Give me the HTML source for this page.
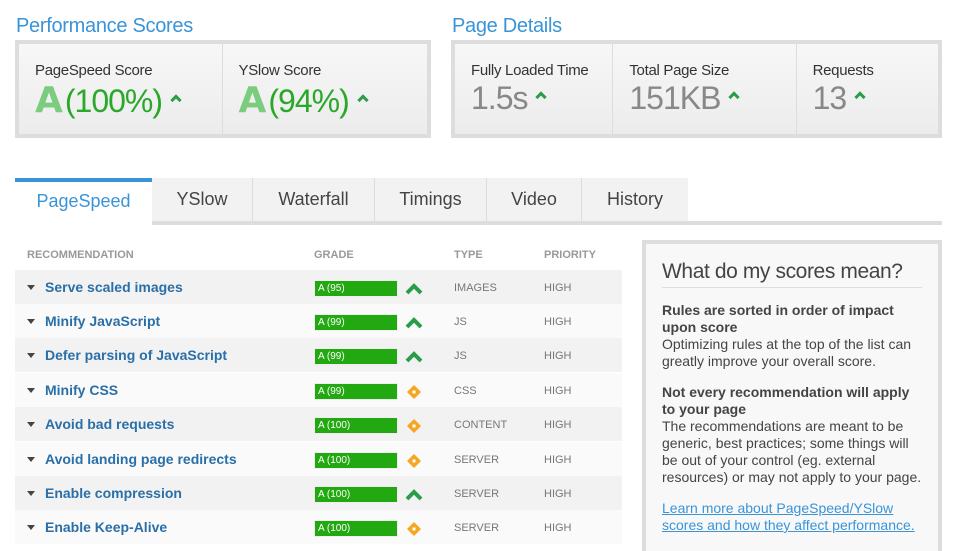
<!DOCTYPE html>
<html><head><style>
*{margin:0;padding:0;box-sizing:border-box}
body{width:960px;height:551px;overflow:hidden;background:#fff;font-family:"Liberation Sans",sans-serif;position:relative}
.abs{position:absolute}
.h{color:#3a94d8;font-size:20px;top:15px;letter-spacing:-0.3px}
.box{border:4px solid #ddd;top:40px;height:98px;display:flex;background:#ddd}
.cell{background:linear-gradient(#f7f7f7,#ececec);height:90px;margin-right:1px;padding:18px 0 0 16px}
.cell:last-child{margin-right:0}
.lab{font-size:15px;color:#333;letter-spacing:-0.3px}
.val{font-size:32px;color:#888;margin-top:1px;white-space:nowrap;letter-spacing:-1px}
.g{color:#2aa82a}
.bigA{font-weight:bold;color:#7ccc80;font-size:36px;font-family:"DejaVu Sans",sans-serif;margin-right:3px}
.car{display:inline-block;width:8px;height:8px;border-left:3px solid #2a9d4a;border-top:3px solid #2a9d4a;transform:rotate(45deg);margin:0 0 8px 10px;vertical-align:middle}
.tabs{top:178px;left:15px;height:44px;display:flex}
.tab{background:#f2f2f2;height:44px;font-size:18px;color:#444;text-align:center;line-height:43px;border-right:1px solid #ddd}
.tab.act{background:#fff;color:#3a94d8;border-top:4px solid #3a94d8;line-height:38px;border-right:none}
.row{position:absolute;left:15px;width:607px;height:34px;font-size:11px;color:#777}
.row .n{position:absolute;left:30px;top:9px;font-size:14px;font-weight:bold;color:#2a6fa8}
.row .tri{position:absolute;left:12px;top:15px;border-left:4px solid transparent;border-right:4px solid transparent;border-top:5px solid #444}
.bar{position:absolute;left:299px;top:10px;width:84px;height:17px;background:#22a811;border:1px solid #eee;color:#fff;font-size:10px;line-height:15px;padding-left:3px}
.ty{position:absolute;left:439px;top:12px}
.pr{position:absolute;left:529px;top:12px}
.ic{position:absolute;left:390px;top:11px}
.hd{top:249px;font-size:11px;color:#999;font-weight:bold}
.panel{left:642px;top:240px;width:300px;height:311px;overflow:hidden;border:4px solid #ddd;border-bottom:none;background:#f8f8f8;padding:15px 16px;color:#444;font-size:14px;line-height:17px}
.panel h2{font-weight:normal;font-size:21px;letter-spacing:-0.4px;white-space:nowrap;color:#444;padding-bottom:2px;border-bottom:1px solid #ddd;margin-bottom:14px;line-height:26px}
.panel b{display:block}
.panel p{margin-bottom:14px}
.panel a{color:#3a94d8;text-decoration:underline}
</style></head><body>
<div class="abs h" style="left:16px">Performance Scores</div>
<div class="abs h" style="left:452px">Page Details</div>
<div class="abs box" style="left:15px;width:416px">
 <div class="cell" style="width:203px"><div class="lab">PageSpeed Score</div><div class="val g"><span class="bigA">A</span>(100%)<span class="car"></span></div></div>
 <div class="cell" style="width:205px"><div class="lab">YSlow Score</div><div class="val g"><span class="bigA">A</span>(94%)<span class="car"></span></div></div>
</div>
<div class="abs box" style="left:451px;width:491px">
 <div class="cell" style="width:158px"><div class="lab">Fully Loaded Time</div><div class="val">1.5s<span class="car"></span></div></div>
 <div class="cell" style="width:183px"><div class="lab">Total Page Size</div><div class="val">151KB<span class="car"></span></div></div>
 <div class="cell" style="width:142px"><div class="lab">Requests</div><div class="val">13<span class="car"></span></div></div>
</div>
<div class="abs tabs">
 <div class="tab act" style="width:137px">PageSpeed</div>
 <div class="tab" style="width:101px">YSlow</div>
 <div class="tab" style="width:122px">Waterfall</div>
 <div class="tab" style="width:112px">Timings</div>
 <div class="tab" style="width:95px">Video</div>
 <div class="tab" style="width:106px;border-right:none">History</div>
</div>
<div class="abs" style="left:152px;top:221px;width:790px;height:4px;background:#ddd"></div>
<div class="abs hd" style="left:27px">RECOMMENDATION</div>
<div class="abs hd" style="left:314px">GRADE</div>
<div class="abs hd" style="left:454px">TYPE</div>
<div class="abs hd" style="left:544px">PRIORITY</div>
<div class="abs panel">
<h2>What do my scores mean?</h2>
<p><b>Rules are sorted in order of impact upon score</b>Optimizing rules at the top of the list can greatly improve your overall score.</p>
<p><b>Not every recommendation will apply to your page</b>The recommendations are meant to be generic, best practices; some things will be out of your control (eg. external resources) or may not apply to your page.</p>
<p><a>Learn more about PageSpeed/YSlow scores and how they affect performance.</a></p>
</div>
<svg width="0" height="0" style="position:absolute"><defs>
<g id="up"><path d="M2 12 L9 5 L16 12" fill="none" stroke="#2a9d4a" stroke-width="4"/></g>
<g id="dm"><path d="M9 1 L16 8 L9 15 L2 8 Z" fill="#f5a623"/><rect x="7.5" y="6.5" width="3" height="3" fill="#fff"/></g>
</defs></svg>
<div class="row" style="top:270px;background:#f2f2f2"><span class="tri"></span><span class="n">Serve scaled images</span><span class="bar">A (95)</span><svg class="ic" width="18" height="16"><use href="#up"/></svg><span class="ty">IMAGES</span><span class="pr">HIGH</span></div>
<div class="row" style="top:304px;background:#fafafa"><span class="tri"></span><span class="n">Minify JavaScript</span><span class="bar">A (99)</span><svg class="ic" width="18" height="16"><use href="#up"/></svg><span class="ty">JS</span><span class="pr">HIGH</span></div>
<div class="row" style="top:338px;background:#f2f2f2"><span class="tri"></span><span class="n">Defer parsing of JavaScript</span><span class="bar">A (99)</span><svg class="ic" width="18" height="16"><use href="#up"/></svg><span class="ty">JS</span><span class="pr">HIGH</span></div>
<div class="row" style="top:373px;background:#fafafa"><span class="tri"></span><span class="n">Minify CSS</span><span class="bar">A (99)</span><svg class="ic" width="18" height="16"><use href="#dm"/></svg><span class="ty">CSS</span><span class="pr">HIGH</span></div>
<div class="row" style="top:407px;background:#f2f2f2"><span class="tri"></span><span class="n">Avoid bad requests</span><span class="bar">A (100)</span><svg class="ic" width="18" height="16"><use href="#dm"/></svg><span class="ty">CONTENT</span><span class="pr">HIGH</span></div>
<div class="row" style="top:442px;background:#fafafa"><span class="tri"></span><span class="n">Avoid landing page redirects</span><span class="bar">A (100)</span><svg class="ic" width="18" height="16"><use href="#dm"/></svg><span class="ty">SERVER</span><span class="pr">HIGH</span></div>
<div class="row" style="top:476px;background:#f2f2f2"><span class="tri"></span><span class="n">Enable compression</span><span class="bar">A (100)</span><svg class="ic" width="18" height="16"><use href="#up"/></svg><span class="ty">SERVER</span><span class="pr">HIGH</span></div>
<div class="row" style="top:510px;background:#fafafa"><span class="tri"></span><span class="n">Enable Keep-Alive</span><span class="bar">A (100)</span><svg class="ic" width="18" height="16"><use href="#dm"/></svg><span class="ty">SERVER</span><span class="pr">HIGH</span></div>
</body></html>
